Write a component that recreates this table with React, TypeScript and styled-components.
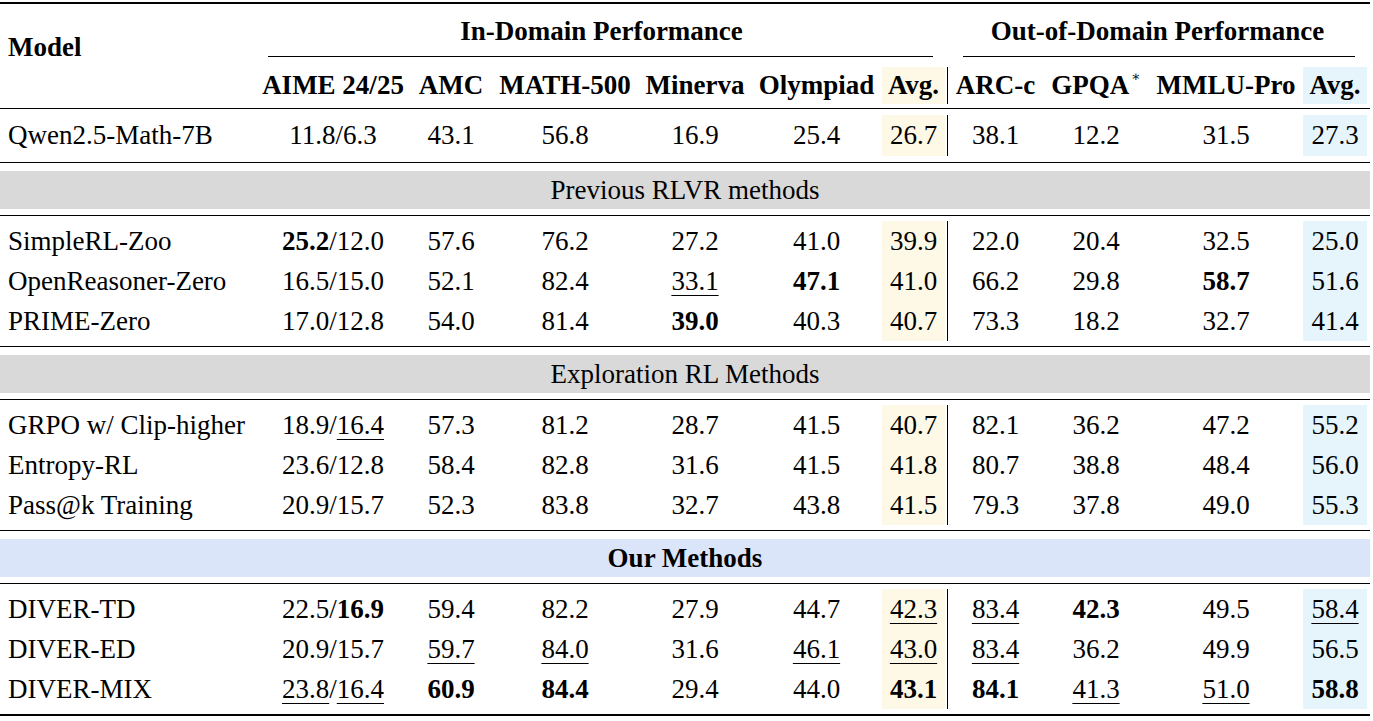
import React from 'react';
import styled, { createGlobalStyle } from 'styled-components';

const COLS = '255px 156px 80px 148px 112px 131px 66px 95px 106px 154px 64px';

type Tone = 'yellow' | 'blue' | 'gray' | 'lavender' | undefined;

const toneColor = (t: Tone) =>
  t === 'yellow'
    ? '#fef9e6'
    : t === 'blue'
    ? '#e6f4fb'
    : t === 'gray'
    ? '#d9d9d9'
    : t === 'lavender'
    ? '#dbe5fa'
    : 'transparent';

const Global = createGlobalStyle`
  html, body { margin: 0; padding: 0; background: #ffffff; }
  body {
    font-family: "Liberation Serif", "Times New Roman", serif;
    color: #000;
  }
`;

const Table = styled.div`
  width: 1370px;
  padding-top: 2px;
  font-size: 27px;
  line-height: 1;
`;

const Rule = styled.div<{ $heavy?: boolean }>`
  height: ${(p) => (p.$heavy ? 2 : 1)}px;
  background: #000;
`;

const Header = styled.div`
  display: grid;
  grid-template-columns: ${COLS};
  grid-template-rows: 52px 1px 51px;
`;

const ModelHead = styled.div`
  grid-column: 1;
  grid-row: 1 / 4;
  display: flex;
  align-items: center;
  padding: 0 0 18px 8px;
  font-weight: 700;
`;

const GroupTitle = styled.div<{ $col: string }>`
  grid-row: 1;
  grid-column: ${(p) => p.$col};
  display: flex;
  align-items: center;
  justify-content: center;
  padding-top: 2px;
  font-weight: 700;
`;

const CmidRule = styled.div<{ $col: string; $inset: string }>`
  grid-row: 2;
  grid-column: ${(p) => p.$col};
  margin: ${(p) => p.$inset};
  background: #000;
`;

const ColHead = styled.div<{ $col: number; $tone?: Tone; $divider?: boolean }>`
  grid-row: 3;
  grid-column: ${(p) => p.$col};
  align-self: start;
  height: 37px;
  margin-top: 10px;
  display: flex;
  align-items: center;
  justify-content: center;
  font-weight: 700;
  white-space: nowrap;
  background: ${(p) => toneColor(p.$tone)};
  ${(p) =>
    p.$divider
      ? `border-right: 1px solid #000; padding-right: 2px; background-clip: content-box;`
      : ''}
`;

const Star = styled.span`
  font-family: "DejaVu Serif", serif;
  font-weight: 400;
  font-size: 14px;
  position: relative;
  top: -10px;
  margin-left: 2px;
`;

const Group = styled.div<{ $pad: number }>`
  padding: ${(p) => p.$pad}px 0;
`;

const Row = styled.div<{ $h: number }>`
  display: grid;
  grid-template-columns: ${COLS};
  height: ${(p) => p.$h}px;
`;

const Cell = styled.div<{ $tone?: Tone; $divider?: boolean; $left?: boolean }>`
  display: flex;
  align-items: center;
  justify-content: ${(p) => (p.$left ? 'flex-start' : 'center')};
  padding-left: ${(p) => (p.$left ? 8 : 0)}px;
  white-space: nowrap;
  background: ${(p) => toneColor(p.$tone)};
  ${(p) =>
    p.$divider
      ? `border-right: 1px solid #000; padding-right: 2px; background-clip: content-box;`
      : ''}
`;

const Section = styled.div`
  padding: 8px 0 6px;
`;

const Band = styled.div<{ $tone: Tone; $bold?: boolean }>`
  height: 38px;
  display: flex;
  align-items: center;
  justify-content: center;
  background: ${(p) => toneColor(p.$tone)};
  font-weight: ${(p) => (p.$bold ? 700 : 400)};
`;

const Bold = styled.b`
  font-weight: 700;
`;

const Under = styled.span`
  text-decoration: underline;
  text-decoration-thickness: 1px;
  text-underline-offset: 5px;
`;

const renderValue = (v: string) =>
  v
    .split(/(\*\*[^*]+\*\*|__[^_]+__)/)
    .filter((s) => s.length > 0)
    .map((s, i) => {
      if (s.startsWith('**')) return <Bold key={i}>{s.slice(2, -2)}</Bold>;
      if (s.startsWith('__')) return <Under key={i}>{s.slice(2, -2)}</Under>;
      return <React.Fragment key={i}>{s}</React.Fragment>;
    });

type DataRow = { name: string; vals: string[] };

const base: DataRow[] = [
  { name: 'Qwen2.5-Math-7B', vals: ['11.8/6.3', '43.1', '56.8', '16.9', '25.4', '26.7', '38.1', '12.2', '31.5', '27.3'] },
];

const previous: DataRow[] = [
  { name: 'SimpleRL-Zoo', vals: ['**25.2**/12.0', '57.6', '76.2', '27.2', '41.0', '39.9', '22.0', '20.4', '32.5', '25.0'] },
  { name: 'OpenReasoner-Zero', vals: ['16.5/15.0', '52.1', '82.4', '__33.1__', '**47.1**', '41.0', '66.2', '29.8', '**58.7**', '51.6'] },
  { name: 'PRIME-Zero', vals: ['17.0/12.8', '54.0', '81.4', '**39.0**', '40.3', '40.7', '73.3', '18.2', '32.7', '41.4'] },
];

const exploration: DataRow[] = [
  { name: 'GRPO w/ Clip-higher', vals: ['18.9/__16.4__', '57.3', '81.2', '28.7', '41.5', '40.7', '82.1', '36.2', '47.2', '55.2'] },
  { name: 'Entropy-RL', vals: ['23.6/12.8', '58.4', '82.8', '31.6', '41.5', '41.8', '80.7', '38.8', '48.4', '56.0'] },
  { name: 'Pass@k Training', vals: ['20.9/15.7', '52.3', '83.8', '32.7', '43.8', '41.5', '79.3', '37.8', '49.0', '55.3'] },
];

const ours: DataRow[] = [
  { name: 'DIVER-TD', vals: ['22.5/**16.9**', '59.4', '82.2', '27.9', '44.7', '__42.3__', '__83.4__', '**42.3**', '49.5', '__58.4__'] },
  { name: 'DIVER-ED', vals: ['20.9/15.7', '__59.7__', '__84.0__', '31.6', '__46.1__', '__43.0__', '__83.4__', '36.2', '49.9', '56.5'] },
  { name: 'DIVER-MIX', vals: ['__23.8__/__16.4__', '**60.9**', '**84.4**', '29.4', '44.0', '**43.1**', '**84.1**', '__41.3__', '__51.0__', '**58.8**'] },
];

const toneFor = (i: number): Tone => (i === 5 ? 'yellow' : i === 9 ? 'blue' : undefined);

const Rows: React.FC<{ rows: DataRow[]; h: number; pad: number }> = ({ rows, h, pad }) => (
  <Group $pad={pad}>
    {rows.map((r) => (
      <Row key={r.name} $h={h}>
        <Cell $left>{r.name}</Cell>
        {r.vals.map((v, i) => (
          <Cell key={i} $tone={toneFor(i)} $divider={i === 5}>
            {renderValue(v)}
          </Cell>
        ))}
      </Row>
    ))}
  </Group>
);

const heads: { label: React.ReactNode; tone?: Tone; divider?: boolean }[] = [
  { label: 'AIME 24/25' },
  { label: 'AMC' },
  { label: 'MATH-500' },
  { label: 'Minerva' },
  { label: 'Olympiad' },
  { label: 'Avg.', tone: 'yellow', divider: true },
  { label: 'ARC-c' },
  {
    label: (
      <>
        GPQA<Star>∗</Star>
      </>
    ),
  },
  { label: 'MMLU-Pro' },
  { label: 'Avg.', tone: 'blue' },
];

export default function App() {
  return (
    <>
      <Global />
      <Table>
        <Rule $heavy />
        <Header>
          <ModelHead>Model</ModelHead>
          <GroupTitle $col="2 / 8">In-Domain Performance</GroupTitle>
          <GroupTitle $col="8 / 12">Out-of-Domain Performance</GroupTitle>
          <CmidRule $col="2 / 8" $inset="0 15px 0 13px" />
          <CmidRule $col="8 / 12" $inset="0 12px 0 15px" />
          {heads.map((h, i) => (
            <ColHead key={i} $col={i + 2} $tone={h.tone} $divider={h.divider}>
              {h.label}
            </ColHead>
          ))}
        </Header>
        <Rule />
        <Rows rows={base} h={41} pad={6} />
        <Rule />
        <Section>
          <Band $tone="gray">Previous RLVR methods</Band>
        </Section>
        <Rule />
        <Rows rows={previous} h={40} pad={5} />
        <Rule />
        <Section>
          <Band $tone="gray">Exploration RL Methods</Band>
        </Section>
        <Rule />
        <Rows rows={exploration} h={40} pad={5} />
        <Rule />
        <Section>
          <Band $tone="lavender" $bold>
            Our Methods
          </Band>
        </Section>
        <Rule />
        <Rows rows={ours} h={40} pad={5} />
        <Rule $heavy />
      </Table>
    </>
  );
}
